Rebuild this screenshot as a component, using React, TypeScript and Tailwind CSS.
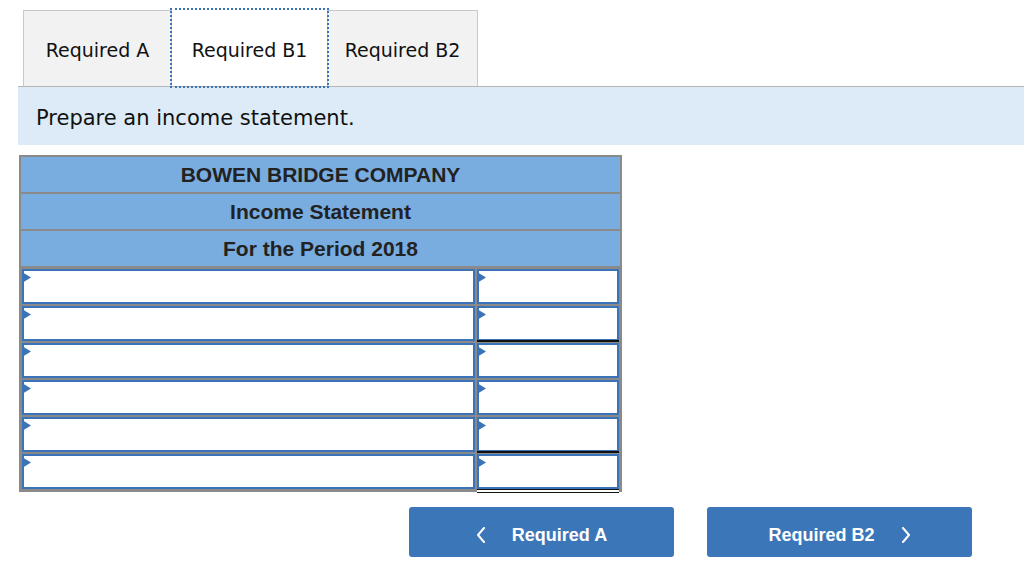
import { useState } from 'react';

const TABS = ['Required A', 'Required B1', 'Required B2'];

const HEADERS = ['BOWEN BRIDGE COMPANY', 'Income Statement', 'For the Period 2018'];

// underline style for the amount column: none, single, double
const ROWS: ('none' | 'single' | 'double')[] = ['none', 'single', 'none', 'none', 'single', 'double'];

function Marker() {
  return (
    <svg className="absolute -left-[2px] top-[1px] z-10" width="9" height="11" viewBox="0 0 9 11">
      <polygon points="0,0 9,5.5 0,11" fill="#3b73b9" />
    </svg>
  );
}

function InputCell({ width, line }: { width: string; line?: 'none' | 'single' | 'double' }) {
  return (
    <div className={`${width} relative h-full border border-[#8a8a8a]`}>
      <div className="relative h-full border-2 border-[#3b73b9] bg-white">
        <Marker />
      </div>
      {line === 'single' && <div className="absolute left-0 right-0 -bottom-[1px] h-[2px] bg-[#111]" />}
      {line === 'double' && (
        <div className="absolute left-0 right-0 -bottom-[4px] h-[4px] border-y border-[#111] bg-white" />
      )}
    </div>
  );
}

function Chevron({ dir }: { dir: 'left' | 'right' }) {
  return (
    <svg width="10" height="16" viewBox="0 0 10 16" fill="none">
      <polyline
        points={dir === 'left' ? '8,1 2,8 8,15' : '2,1 8,8 2,15'}
        stroke="white"
        strokeWidth="2"
        strokeLinecap="round"
        strokeLinejoin="round"
      />
    </svg>
  );
}

export default function App() {
  const [active, setActive] = useState(1);

  return (
    <div className="w-[1024px] h-[567px] bg-white pl-[18px] overflow-hidden">
      {/* Tabs */}
      <div className="flex pl-[5px] pt-[10px] h-[86px]">
        {TABS.map((tab, i) => (
          <button
            key={tab}
            onClick={() => setActive(i)}
            className={`
              h-full pt-[4px] text-[19px] text-[#111] font-['DejaVu_Sans',Verdana,sans-serif]
              ${
                active === i
                  ? 'bg-white w-[155px] outline-2 outline-dotted outline-[#3b73b9] relative z-10'
                  : 'bg-[#f2f2f2] border border-[#c9c9c9] border-b-0 ' + (i === 0 ? 'w-[149px]' : 'w-[151px]')
              }
            `}
          >
            {tab}
          </button>
        ))}
      </div>

      {/* Instructions */}
      <div className="h-[59px] border-t border-[#b5b5b5] bg-[#dcebf7] flex items-center pl-[18px] pt-[5px]">
        <span className="text-[21px] text-[#111] font-['DejaVu_Sans',Verdana,sans-serif]">
          Prepare an income statement.
        </span>
      </div>

      {/* Statement table */}
      <div className="mt-[10px] ml-[1px] w-[603px] border-2 border-[#8a8a8a] font-['Liberation_Sans',Arial,sans-serif]">
        {HEADERS.map((h) => (
          <div
            key={h}
            className="h-[37px] flex items-center justify-center bg-[#79acdf] border-b-2 border-[#8a8a8a] text-[21px] font-bold text-[#222]"
          >
            {h}
          </div>
        ))}
        {ROWS.map((line, i) => (
          <div key={i} className="flex h-[37px]">
            <InputCell width="w-[455px]" />
            <InputCell width="flex-1" line={line} />
          </div>
        ))}
      </div>

      {/* Navigation */}
      <div className="flex justify-end pr-[52px] gap-[33px] mt-[15px] font-['Liberation_Sans',Arial,sans-serif]">
        <button className="w-[265px] h-[50px] rounded-[3px] bg-[#3b76b8] flex items-center justify-center gap-[26px] pt-[6px] text-white text-[18px] font-bold">
          <Chevron dir="left" />
          <span>Required A</span>
        </button>
        <button className="w-[265px] h-[50px] rounded-[3px] bg-[#3b76b8] flex items-center justify-center gap-[26px] pt-[6px] text-white text-[18px] font-bold">
          <span>Required B2</span>
          <Chevron dir="right" />
        </button>
      </div>
    </div>
  );
}
